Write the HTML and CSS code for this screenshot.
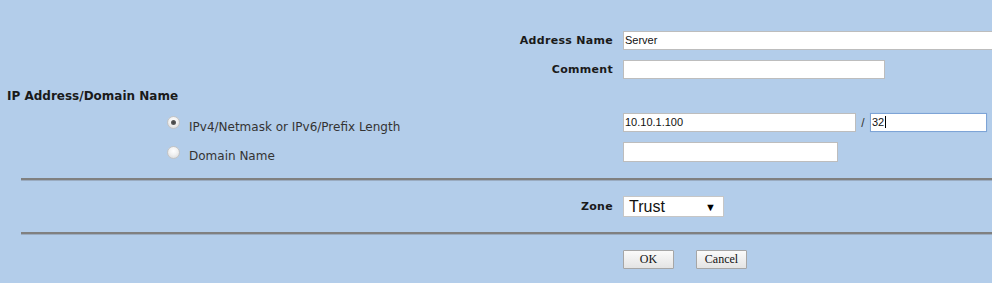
FILE: index.html
```html
<!DOCTYPE html>
<html>
<head>
<meta charset="utf-8">
<title>Address</title>
<link rel="stylesheet" href="styles.css">
</head>
<body>
<div class="form">
  <div class="row row-name">
    <div class="label">Address Name</div>
    <div class="field f-name">Server</div>
  </div>
  <div class="row row-comment">
    <div class="label">Comment</div>
    <div class="field f-comment"></div>
  </div>
  <div class="heading">IP Address/Domain Name</div>
  <div class="row row-ip">
    <div class="radio-cell">
      <span class="radio checked"></span>
      <span class="radio-label">IPv4/Netmask or IPv6/Prefix Length</span>
    </div>
    <div class="ip-fields">
      <div class="field f-ip">10.10.1.100</div>
      <span class="slash">/</span>
      <div class="field f-prefix focused">32<span class="caret"></span></div>
    </div>
  </div>
  <div class="row row-domain">
    <div class="radio-cell">
      <span class="radio"></span>
      <span class="radio-label">Domain Name</span>
    </div>
    <div class="field f-domain"></div>
  </div>
  <div class="rule rule-1"></div>
  <div class="row row-zone">
    <div class="label">Zone</div>
    <div class="select"><span class="select-value">Trust</span><span class="select-arrow">&#9660;</span></div>
  </div>
  <div class="rule rule-2"></div>
  <div class="row row-buttons">
    <div></div>
    <div class="buttons">
      <button class="btn" type="button">OK</button>
      <button class="btn" type="button">Cancel</button>
    </div>
  </div>
</div>
</body>
</html>
```
FILE: styles.css
```css
html, body {
  margin: 0;
  padding: 0;
  overflow: hidden;
}
body {
  background: #b3cdea;
  font-family: "DejaVu Sans", Verdana, sans-serif;
  font-size: 11px;
  color: #1c1c1c;
  width: 992px;
  height: 283px;
}
.form {
  padding-top: 31px;
}
.row {
  display: grid;
  grid-template-columns: 613px 1fr;
  column-gap: 10px;
  align-items: center;
}
.label {
  text-align: right;
  font-weight: bold;
  color: #1a1a1a;
  letter-spacing: 0.3px;
}
.field {
  box-sizing: border-box;
  height: 19px;
  background: #fff;
  border: 1px solid #bdbdbd;
  font-family: "Liberation Sans", Arial, sans-serif;
  font-size: 11px;
  line-height: 17px;
  padding: 0 1px;
  color: #111;
  white-space: nowrap;
  overflow: hidden;
}
.row-comment {
  margin-top: 10px;
}
.f-name { width: 400px; }
.f-comment { width: 262px; }
.heading {
  margin-top: 10px;
  padding-left: 7px;
  font-weight: bold;
  font-size: 12px;
  line-height: 14px;
  color: #1a1a1a;
}
.row-ip {
  margin-top: 10px;
}
.row-domain {
  margin-top: 10px;
}
.radio-cell {
  display: flex;
  align-items: center;
  height: 19px;
  padding-left: 167px;
}
.radio {
  box-sizing: border-box;
  width: 13px;
  height: 13px;
  border-radius: 50%;
  border: 1px solid #c4c4c4;
  background: radial-gradient(circle at 50% 35%, #ffffff 0%, #f1f1f1 45%, #d6d6d6 100%);
  position: relative;
  flex: none;
}
.radio.checked::after {
  content: "";
  position: absolute;
  left: 3px;
  top: 3px;
  width: 5px;
  height: 5px;
  border-radius: 50%;
  background: radial-gradient(circle, #444 0%, #666 100%);
}
.radio-label {
  margin-left: 9px;
  padding-top: 9px;
  font-size: 12px;
  line-height: 13px;
  color: #333;
}
.ip-fields {
  display: flex;
  align-items: center;
}
.f-ip { width: 233px; }
.slash {
  width: 14px;
  text-align: center;
  color: #333;
  font-family: "Liberation Sans", Arial, sans-serif;
  font-size: 12px;
}
.f-prefix { width: 117px; }
.field.focused {
  border-color: #7ea4d6;
  box-shadow: 0 0 1px #9bbbe6;
}
.caret {
  display: inline-block;
  width: 1px;
  height: 12px;
  background: #000;
  vertical-align: -2px;
  margin-left: 1px;
}
.f-domain { width: 215px; height: 20px; }
.rule {
  margin-left: 21px;
  height: 2px;
  background: #808080;
  border-bottom: 1px solid #9aabc0;
}
.rule-1 { margin-top: 16px; }
.row-zone { margin-top: 15px; }
.select {
  box-sizing: border-box;
  width: 101px;
  height: 21px;
  background: #fff;
  border: 1px solid #c6c6c6;
  display: flex;
  align-items: center;
  justify-content: space-between;
  padding: 0 7px 0 5px;
  font-family: "Liberation Sans", Arial, sans-serif;
  font-size: 16px;
  color: #111;
}
.select-arrow {
  font-size: 11px;
  color: #000;
}
.rule-2 { margin-top: 15px; }
.row-buttons { margin-top: 15px; }
.buttons {
  display: flex;
  gap: 22px;
}
.btn {
  box-sizing: border-box;
  width: 51px;
  height: 19px;
  padding: 0;
  margin: 0;
  border: 1px solid #a6a6a6;
  border-radius: 1px;
  background: linear-gradient(#fafafa, #e4e4e4);
  font-family: "Liberation Serif", "Times New Roman", serif;
  font-size: 12px;
  color: #111;
  line-height: 17px;
}
```
